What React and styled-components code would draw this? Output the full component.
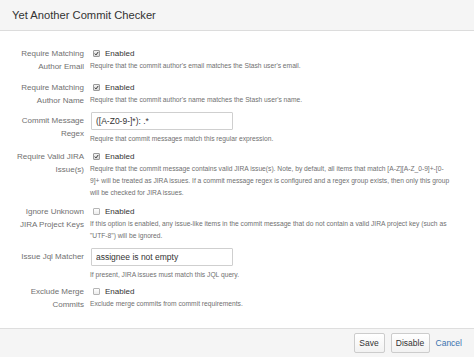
import React from "react";
import styled, { createGlobalStyle } from "styled-components";

const GlobalStyle = createGlobalStyle`
  html, body {
    margin: 0;
    padding: 0;
    background: #fff;
  }
  body {
    font-family: "Liberation Sans", Arial, Helvetica, sans-serif;
    color: #333;
  }
`;

const Dialog = styled.div`
  width: 474px;
  height: 357px;
  display: flex;
  flex-direction: column;
  background: #fff;
  overflow: hidden;
`;

const Header = styled.header`
  flex: none;
  height: 30px;
  display: flex;
  align-items: center;
  padding: 0 12px;
  background: #f5f5f5;
  border-bottom: 1px solid #dcdcdc;
`;

const Title = styled.h2`
  margin: 0;
  font-size: 11.2px;
  font-weight: normal;
  color: #333;
`;

const Form = styled.form`
  flex: 1;
  padding: 15.5px 12px 0 8px;
`;

const Field = styled.div`
  display: grid;
  grid-template-columns: 76px 1fr;
  column-gap: 6px;
  margin-bottom: ${(p) => p.$gap ?? 6}px;
`;

const Label = styled.label`
  text-align: right;
  font-size: 8px;
  line-height: 13px;
  color: #707070;
  padding-top: ${(p) => (p.$withInput ? 2.5 : 0)}px;
`;

const Control = styled.div`
  display: flex;
  flex-direction: column;
  align-items: flex-start;
`;

const CheckLine = styled.label`
  display: flex;
  align-items: center;
  height: 13px;
  font-size: 8px;
  color: #333;
`;

const Box = styled.span`
  box-sizing: border-box;
  width: 7px;
  height: 7px;
  margin: 0 5px 0 3px;
  border: 1px solid ${(p) => (p.$checked ? "#9a9a9a" : "#b5b5b5")};
  border-radius: 1px;
  background: ${(p) =>
    p.$checked ? "linear-gradient(#f4f4f4, #d6d6d6)" : "linear-gradient(#fff, #ececec)"};
  display: flex;
  align-items: center;
  justify-content: center;
`;

const TextInput = styled.input`
  box-sizing: border-box;
  width: 142px;
  height: 18px;
  margin: 0 0 0 1px;
  padding: 0 4px;
  border: 1px solid #cfcfcf;
  border-radius: 1px;
  font-family: inherit;
  font-size: 8.5px;
  color: #333;
  background: #fff;
  outline: none;
`;

const Description = styled.div`
  font-size: 6.7px;
  line-height: 12px;
  color: #707070;
  white-space: nowrap;
  margin-top: ${(p) => (p.$afterInput ? 3 : 0)}px;
`;

const Footer = styled.footer`
  flex: none;
  height: 28px;
  display: flex;
  align-items: center;
  justify-content: flex-end;
  gap: 6px;
  padding: 0 12px 0 0;
  background: #f5f5f5;
  border-top: 1px solid #dedede;
`;

const Button = styled.button`
  box-sizing: border-box;
  width: ${(p) => p.$width}px;
  height: 20px;
  padding: 0;
  border: 1px solid #cccccc;
  border-radius: 2px;
  background: linear-gradient(#ffffff, #f2f2f2);
  font-family: inherit;
  font-size: 8.5px;
  color: #333;
`;

const CancelLink = styled.a`
  font-size: 8.5px;
  color: #3b73af;
  text-decoration: none;
  cursor: pointer;
`;

const Tick = () => (
  <svg width="5" height="5" viewBox="0 0 10 10">
    <path d="M1.5 5.2 L4 7.8 L8.6 1.8" fill="none" stroke="#333" strokeWidth="2" />
  </svg>
);

const CheckField = ({ label, checked, gap, children }) => (
  <Field $gap={gap}>
    <Label>{label}</Label>
    <Control>
      <CheckLine>
        <Box $checked={checked}>{checked && <Tick />}</Box>
        Enabled
      </CheckLine>
      <Description>{children}</Description>
    </Control>
  </Field>
);

const InputField = ({ label, value, gap, children }) => (
  <Field $gap={gap}>
    <Label $withInput>{label}</Label>
    <Control>
      <TextInput value={value} readOnly />
      <Description $afterInput>{children}</Description>
    </Control>
  </Field>
);

export default function App() {
  return (
    <>
      <GlobalStyle />
      <Dialog>
        <Header>
          <Title>Yet Another Commit Checker</Title>
        </Header>
        <Form>
          <CheckField label="Require Matching Author Email" checked gap={8}>
            Require that the commit author's email matches the Stash user's email.
          </CheckField>
          <CheckField label="Require Matching Author Name" checked gap={5}>
            Require that the commit author's name matches the Stash user's name.
          </CheckField>
          <InputField label="Commit Message Regex" value="([A-Z0-9-]*): .*" gap={5}>
            Require that commit messages match this regular expression.
          </InputField>
          <CheckField label="Require Valid JIRA Issue(s)" checked>
            Require that the commit message contains valid JIRA issue(s). Note, by default, all items that match [A-Z][A-Z_0-9]+-[0-
            <br />
            9]+ will be treated as JIRA issues. If a commit message regex is configured and a regex group exists, then only this group
            <br />
            will be checked for JIRA issues.
          </CheckField>
          <CheckField label="Ignore Unknown JIRA Project Keys">
            If this option is enabled, any issue-like items in the commit message that do not contain a valid JIRA project key (such as
            <br />
            "UTF-8") will be ignored.
          </CheckField>
          <InputField label="Issue Jql Matcher" value="assignee is not empty" gap={4}>
            If present, JIRA issues must match this JQL query.
          </InputField>
          <CheckField label="Exclude Merge Commits">
            Exclude merge commits from commit requirements.
          </CheckField>
        </Form>
        <Footer>
          <Button $width={31}>Save</Button>
          <Button $width={39}>Disable</Button>
          <CancelLink>Cancel</CancelLink>
        </Footer>
      </Dialog>
    </>
  );
}
